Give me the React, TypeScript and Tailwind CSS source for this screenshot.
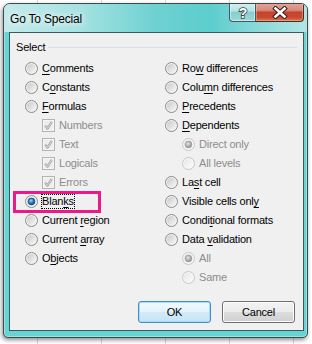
import React from "react";

type Item = {
  label: string;
  k?: number;
  kind: "radio" | "check";
  checked?: boolean;
  disabled?: boolean;
  indent?: boolean;
  focus?: boolean;
};

const leftItems: Item[] = [
  { label: "Comments", k: 0, kind: "radio" },
  { label: "Constants", k: 1, kind: "radio" },
  { label: "Formulas", k: 0, kind: "radio" },
  { label: "Numbers", kind: "check", checked: true, disabled: true, indent: true },
  { label: "Text", kind: "check", checked: true, disabled: true, indent: true },
  { label: "Logicals", kind: "check", checked: true, disabled: true, indent: true },
  { label: "Errors", kind: "check", checked: true, disabled: true, indent: true },
  { label: "Blanks", k: 4, kind: "radio", checked: true, focus: true },
  { label: "Current region", k: 8, kind: "radio" },
  { label: "Current array", k: 8, kind: "radio" },
  { label: "Objects", k: 1, kind: "radio" },
];

const rightItems: Item[] = [
  { label: "Row differences", k: 2, kind: "radio" },
  { label: "Column differences", k: 4, kind: "radio" },
  { label: "Precedents", k: 0, kind: "radio" },
  { label: "Dependents", k: 0, kind: "radio" },
  { label: "Direct only", kind: "radio", checked: true, disabled: true, indent: true },
  { label: "All levels", kind: "radio", disabled: true, indent: true },
  { label: "Last cell", k: 2, kind: "radio" },
  { label: "Visible cells only", k: 17, kind: "radio" },
  { label: "Conditional formats", k: 5, kind: "radio" },
  { label: "Data validation", k: 5, kind: "radio" },
  { label: "All", kind: "radio", checked: true, disabled: true, indent: true },
  { label: "Same", kind: "radio", disabled: true, indent: true },
];

function Defs() {
  return (
    <svg width="0" height="0" className="block w-0 h-0 overflow-hidden">
      <defs>
        <linearGradient id="rIn" x1="0" y1="0" x2="1" y2="1">
          <stop offset="0" stopColor="#c9c9c9" />
          <stop offset="1" stopColor="#f8f8f8" />
        </linearGradient>
        <linearGradient id="rInD" x1="0" y1="0" x2="1" y2="1">
          <stop offset="0" stopColor="#e6e6e6" />
          <stop offset="1" stopColor="#fbfbfb" />
        </linearGradient>
        <radialGradient id="rDot" cx="0.42" cy="0.38" r="0.65">
          <stop offset="0" stopColor="#9ee0ff" />
          <stop offset="0.45" stopColor="#2b8fd6" />
          <stop offset="1" stopColor="#0d3d66" />
        </radialGradient>
        <radialGradient id="rDotD" cx="0.42" cy="0.38" r="0.65">
          <stop offset="0" stopColor="#e8e8e8" />
          <stop offset="0.5" stopColor="#b4b4b4" />
          <stop offset="1" stopColor="#8c8c8c" />
        </radialGradient>
      </defs>
    </svg>
  );
}

function Radio({ checked, disabled }: { checked?: boolean; disabled?: boolean }) {
  return (
    <svg width="13" height="13" viewBox="0 0 13 13" className="shrink-0">
      <circle cx="6.5" cy="6.5" r="6" fill={disabled ? "#f7f7f7" : "#f2f2f2"} stroke={disabled ? "#c6c6c6" : "#8a8a8a"} />
      <circle cx="6.5" cy="6.5" r="4.6" fill={disabled ? "url(#rInD)" : "url(#rIn)"} />
      {checked && (
        <circle
          cx="6.5"
          cy="6.5"
          r="3.4"
          fill={disabled ? "url(#rDotD)" : "url(#rDot)"}
          stroke={disabled ? "#9a9a9a" : "#173a58"}
          strokeWidth="0.6"
        />
      )}
    </svg>
  );
}

function Check() {
  return (
    <svg width="13" height="13" viewBox="0 0 13 13" className="shrink-0">
      <rect x="0.5" y="0.5" width="12" height="12" fill="#f6f6f6" stroke="#b3b3b3" />
      <rect x="2" y="2" width="9" height="9" fill="#eeeeee" />
      <path d="M3.2 6.6 L5.4 9.6 L9.8 2.8" fill="none" stroke="#a0a0a0" strokeWidth="2.2" strokeLinejoin="round" />
      <path d="M3.2 6.6 L5.4 9.6 L9.8 2.8" fill="none" stroke="#e2e2e2" strokeWidth="0.9" strokeLinejoin="round" />
    </svg>
  );
}

function Label({ item }: { item: Item }) {
  const { label, k } = item;
  const content =
    k === undefined ? (
      label
    ) : (
      <>
        {label.slice(0, k)}
        <span className="underline underline-offset-[2px]">{label[k]}</span>
        {label.slice(k + 1)}
      </>
    );
  if (item.focus) {
    return (
      <span className="-ml-[1px] border border-dotted border-black leading-[13px]">{content}</span>
    );
  }
  return <span className={item.disabled ? "text-[#8d8d8d]" : "text-black"}>{content}</span>;
}

function Row({ item }: { item: Item }) {
  return (
    <div className={`h-[19px] flex items-center gap-[4px] ${item.indent ? "pl-[17px]" : ""}`}>
      {item.kind === "radio" ? <Radio checked={item.checked} disabled={item.disabled} /> : <Check />}
      <Label item={item} />
    </div>
  );
}

function Button({ label, primary }: { label: string; primary?: boolean }) {
  return (
    <div
      className={`w-[73px] h-[22px] rounded-[3px] border flex items-center justify-center text-black ${
        primary
          ? "border-[#3c8fd0] shadow-[inset_0_0_0_1px_#a6dcf8] bg-[linear-gradient(180deg,#f2f9fd_0%,#e6f3fb_48%,#d2ebf8_52%,#c6e4f6_100%)]"
          : "border-[#707070] shadow-[inset_0_0_0_1px_#fcfcfc] bg-[linear-gradient(180deg,#f3f3f3_0%,#ebebeb_48%,#dddddd_52%,#cfcfcf_100%)]"
      }`}
    >
      {label}
    </div>
  );
}

export default function App() {
  return (
    <div className="w-[312px] h-[344px] overflow-hidden bg-white bg-[linear-gradient(90deg,#d6d9de_1px,transparent_1px)] bg-[length:64px_100%] bg-[position:37px_0] pt-[3px] pl-[3px] font-['Liberation_Sans',Arial,sans-serif] text-[11px] tracking-[-0.2px]">
      <Defs />
      <div className="w-[305px] h-[335px] rounded-t-[7px] rounded-b-[5px] border border-[#3e4b4d] bg-[#66d4d4] shadow-[-1px_2px_4px_rgba(0,0,0,0.45),inset_0_0_0_1px_rgba(255,255,255,0.35)] overflow-hidden">
        <div className="h-[28px] flex items-start justify-between bg-[linear-gradient(90deg,#c3eaea_0%,#a6e2e2_25%,#6fd1d1_50%,#5ccdcd_68%,#8fdada_85%,#b2e5e5_100%)]">
          <div className="pl-[6px] pt-[6px] text-[12px] text-black [text-shadow:0_0_6px_#ffffff,0_0_10px_#ffffff]">
            Go To Special
          </div>
          <div className="flex h-[19px] mr-[3px] -mt-[1px]">
            <div className="w-[27px] h-full rounded-bl-[4px] border border-t-0 border-[#3e5a5e] shadow-[inset_0_0_0_1px_rgba(255,255,255,0.45)] bg-[linear-gradient(180deg,#d6f0f0_0%,#b3e2e2_45%,#86cdcd_52%,#9fd9d9_100%)] flex items-center justify-center">
              <svg width="14" height="15" viewBox="0 0 14 15">
                <text
                  x="7"
                  y="12.5"
                  textAnchor="middle"
                  fontFamily="Liberation Sans, Arial, sans-serif"
                  fontWeight="bold"
                  fontSize="14"
                  fill="#ffffff"
                  stroke="#34474a"
                  strokeWidth="1.6"
                  paintOrder="stroke"
                >
                  ?
                </text>
              </svg>
            </div>
            <div className="w-[48px] h-full rounded-br-[4px] border border-t-0 border-l-0 border-[#4a2a25] shadow-[inset_0_0_0_1px_rgba(255,220,210,0.35)] bg-[linear-gradient(180deg,#e3a597_0%,#d98b7b_40%,#c5432d_52%,#c94a30_80%,#db7a55_100%)] flex items-center justify-center">
              <svg width="16" height="13" viewBox="0 0 16 13">
                <path d="M3.5 2.5 L12.5 10.5 M12.5 2.5 L3.5 10.5" stroke="#3b2220" strokeWidth="4.6" strokeLinecap="square" />
                <path d="M3.5 2.5 L12.5 10.5 M12.5 2.5 L3.5 10.5" stroke="#ffffff" strokeWidth="2.6" strokeLinecap="square" />
              </svg>
            </div>
          </div>
        </div>
        <div className="relative ml-[5px] w-[295px] h-[299px] border border-[#3a5a5c] bg-[#f0f0f0] flex flex-col">
          <div className="mt-[7px] h-[14px] flex items-center gap-[3px] pl-[6px] pr-[6px]">
            <span className="text-black">Select</span>
            <div className="flex-1 h-px bg-[#d5dfe5]" />
          </div>
          <div className="mt-[5px] grid grid-cols-[140px_1fr] pl-[15px]">
            <div className="flex flex-col">
              {leftItems.map((it) => (
                <Row key={it.label} item={it} />
              ))}
            </div>
            <div className="flex flex-col">
              {rightItems.map((it) => (
                <Row key={it.label} item={it} />
              ))}
            </div>
          </div>
          <div className="mt-[14px] flex justify-end gap-[11px] pr-[8px]">
            <Button label="OK" primary />
            <Button label="Cancel" />
          </div>
          <div className="absolute left-[3px] top-[158px] w-[88px] h-[22px] border-[3px] border-[#ec1a88]" />
        </div>
      </div>
    </div>
  );
}
